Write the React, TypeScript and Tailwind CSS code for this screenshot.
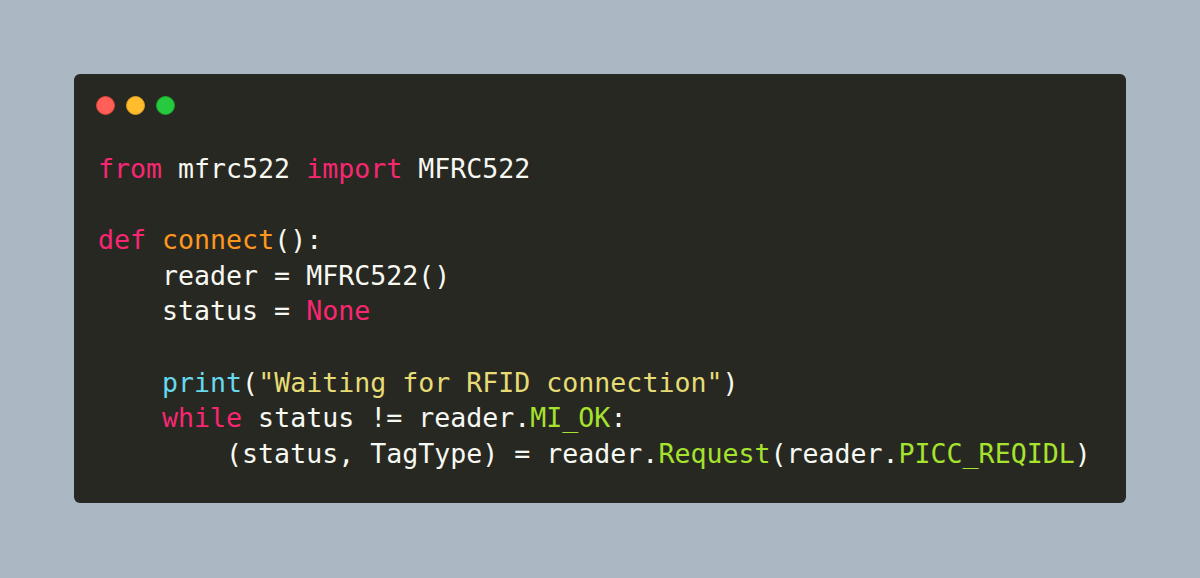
const lines: [string, string][][] = [
  [["from", "k"], [" mfrc522 ", "w"], ["import", "k"], [" MFRC522", "w"]],
  [],
  [["def", "k"], [" ", "w"], ["connect", "f"], ["():", "w"]],
  [["    reader = MFRC522()", "w"]],
  [["    status = ", "w"], ["None", "k"]],
  [],
  [["    ", "w"], ["print", "c"], ["(", "w"], ['"Waiting for RFID connection"', "s"], [")", "w"]],
  [["    ", "w"], ["while", "k"], [" status != reader.", "w"], ["MI_OK", "g"], [":", "w"]],
  [
    ["        (status, TagType) = reader.", "w"],
    ["Request", "g"],
    ["(reader.", "w"],
    ["PICC_REQIDL", "g"],
    [")", "w"],
  ],
];

const colors: Record<string, string> = {
  k: "text-[#f92672]",
  w: "text-[#f8f8f2]",
  f: "text-[#fd971f]",
  c: "text-[#66d9ef]",
  s: "text-[#e6db74]",
  g: "text-[#a6e22e]",
};

export default function App() {
  return (
    <div className="w-[1200px] h-[578px] bg-[#abb8c3] p-[74px]">
      <div className="w-[1052px] h-[429px] bg-[#272822] rounded-[6px] pt-[22px]">
        <div className="flex gap-[11px] pl-[22px]">
          <span className="w-[19px] h-[19px] rounded-full bg-[#ff5f56] border border-[#e0443e]" />
          <span className="w-[19px] h-[19px] rounded-full bg-[#ffbd2e] border border-[#dea123]" />
          <span className="w-[19px] h-[19px] rounded-full bg-[#27c93f] border border-[#1aab29]" />
        </div>
        <pre
          className="mt-[36px] pl-[24px] text-[26.6px] leading-[35.6px]"
          style={{ fontFamily: '"DejaVu Sans Mono", "Liberation Mono", monospace' }}
        >
          {lines.map((line, i) => (
            <div key={i} className="h-[35.6px]">
              {line.map(([t, c], j) => (
                <span key={j} className={colors[c]}>
                  {t}
                </span>
              ))}
            </div>
          ))}
        </pre>
      </div>
    </div>
  );
}
